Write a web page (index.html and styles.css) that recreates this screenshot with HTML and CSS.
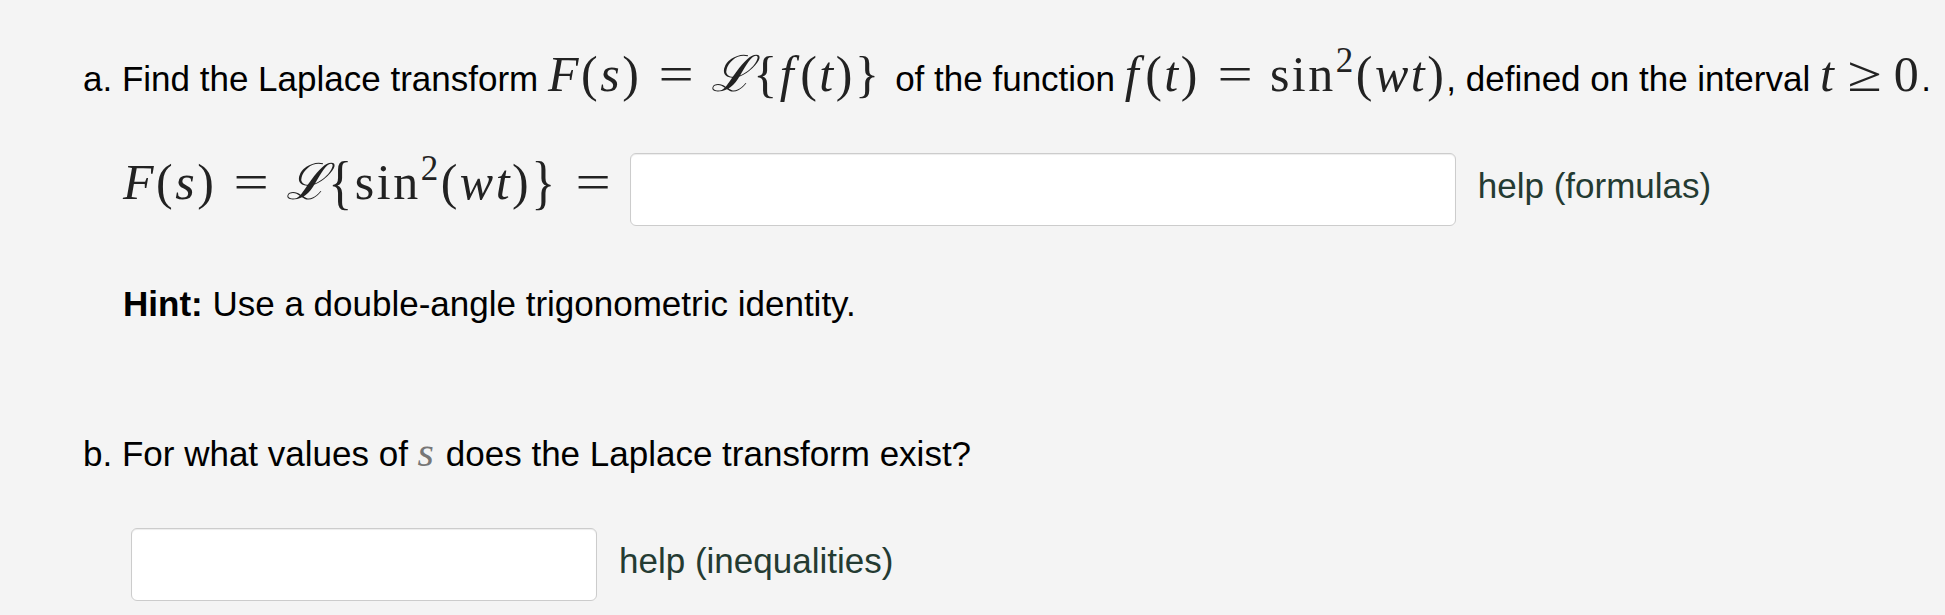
FILE: index.html
```html
<!DOCTYPE html>
<html>
<head>
<meta charset="utf-8">
<title>Laplace transform</title>
<link rel="stylesheet" href="styles.css">
</head>
<body>
<div class="page">
  <p class="q">a. Find the Laplace transform <span class="math m1 gap"><i>F</i>(<i>s</i>)<span class="rel"><span class="eq">=</span></span><span class="cal">ℒ</span>{<i class="fi">f</i>(<i>t</i>)}</span> of the function <span class="math m1"><i class="fi">f</i>(<i>t</i>)<span class="rel"><span class="eq">=</span></span>sin<sup class="sup">2</sup>(<i>wt</i>)</span>, defined on the interval <span class="math m1"><i>t</i><span class="rel tight"><span class="eq">≥</span></span>0</span>.</p>
  <div class="answer-row row-a">
    <span class="math m2"><i>F</i>(<i>s</i>)<span class="rel"><span class="eq">=</span></span><span class="cal">ℒ</span><span class="big">{</span>sin<sup class="sup">2</sup>(<i>wt</i>)<span class="big">}</span><span class="rel"><span class="eq">=</span></span></span>
    <input class="ans wide" type="text">
    <a class="help" href="#">help (formulas)</a>
  </div>
  <p class="hint"><b>Hint:</b> Use a double-angle trigonometric identity.</p>
  <p class="q qb">b. For what values of <span class="math ms"><i>s</i></span> does the Laplace transform exist?</p>
  <div class="answer-row row-b">
    <input class="ans narrow" type="text">
    <a class="help" href="#">help (inequalities)</a>
  </div>
</div>
</body>
</html>
```

FILE: styles.css
```css
body {
  margin: 0;
  background: #f4f4f4;
  font-family: "Liberation Sans", Arial, sans-serif;
  font-size: 35px;
  color: #000;
}

.page {
  padding: 54px 0 0 83px;
}

.q {
  margin: 0;
  line-height: 50px;
  white-space: nowrap;
}

.math {
  font-family: "Liberation Serif", "Times New Roman", serif;
  color: #222;
  letter-spacing: 0.05em;
  white-space: nowrap;
}

.math i {
  font-style: italic;
}

.m1 {
  font-size: 50px;
  line-height: 40px;
}

.gap {
  margin-right: 4px;
}

.fi {
  padding-right: 0.08em;
}

.rel {
  display: inline-block;
  width: 1.4em;
  text-align: center;
  letter-spacing: 0;
}

.rel.tight {
  width: 1.15em;
}

.eq {
  display: inline-block;
  transform: scaleX(1.25);
}

.cal {
  display: inline-block;
  width: 0.84em;
  font-family: "DejaVu Serif", "Liberation Serif", serif;
  font-style: italic;
  letter-spacing: 0;
}

.big {
  display: inline-block;
  transform: scaleY(1.18);
}

.sup {
  font-size: 0.7em;
  vertical-align: 0.55em;
  line-height: 0;
}

.answer-row {
  display: flex;
  align-items: flex-start;
  margin-top: 49px;
}

.row-a {
  padding-left: 40px;
}

.m2 {
  display: block;
  font-size: 50px;
  line-height: 59px;
}

.ans {
  height: 73px;
  box-sizing: border-box;
  border: 1px solid #ccc;
  border-radius: 6px;
  background: #fff;
  box-shadow: inset 0 1px 1px rgba(0, 0, 0, 0.075);
  margin: 0 22px 0 2px;
  padding: 0;
}

.wide {
  width: 826px;
}

.narrow {
  width: 466px;
  margin-left: 48px;
}

.help {
  line-height: 66px;
  color: #243b32;
  text-decoration: none;
  white-space: nowrap;
}

.hint {
  margin: 53px 0 0 40px;
  line-height: 50px;
}

.qb {
  margin-top: 100px;
}

.ms {
  font-size: 42px;
  line-height: 40px;
  color: #777;
}
```
